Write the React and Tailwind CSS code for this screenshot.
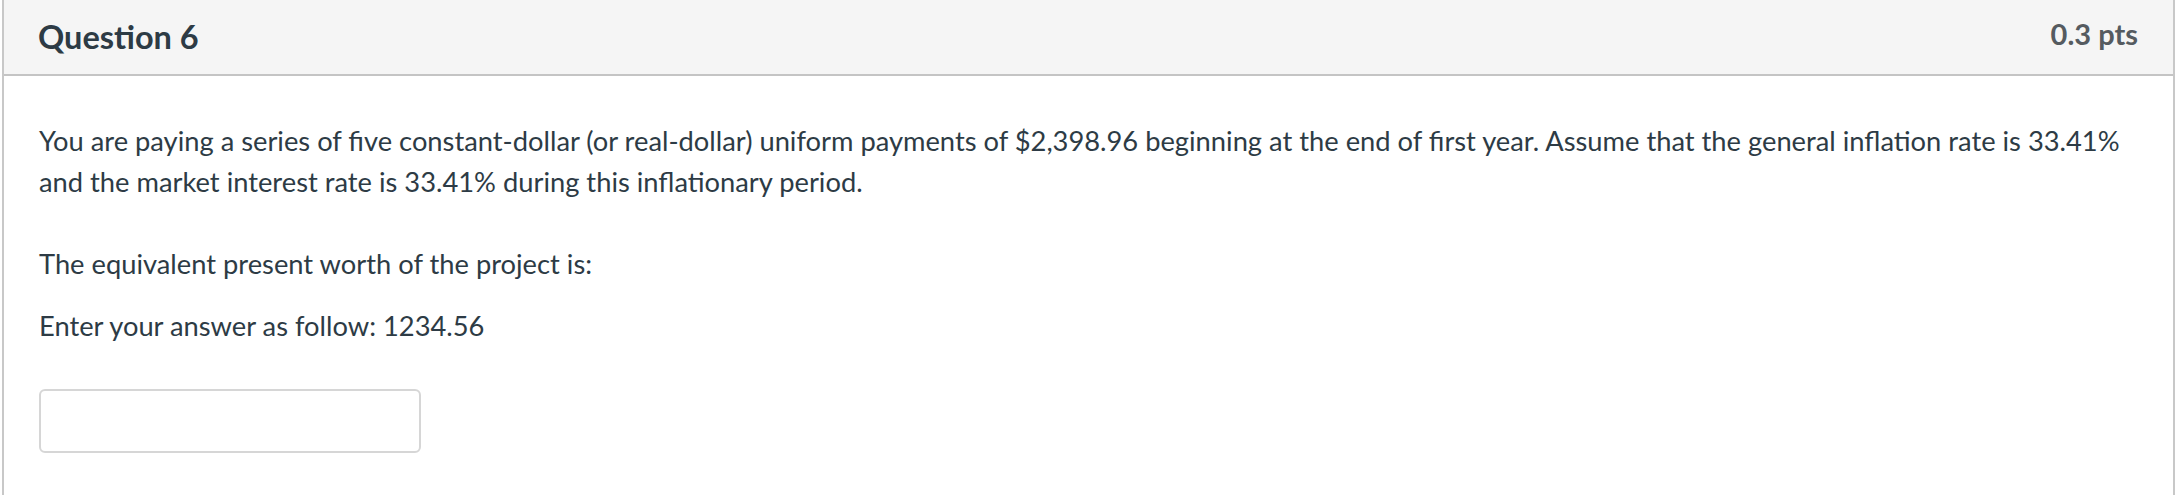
export default function App() {
  return (
    <div className="h-[495px] w-full overflow-hidden bg-white" style={{ fontFamily: "Lato, 'Noto Sans', sans-serif" }}>
      <div className="ml-[2px] w-[2173px] min-h-[600px] border-x-2 border-[#c8c8c8]">
        {/* header */}
        <div className="flex h-[76px] items-start justify-between border-b-2 border-[#c4c4c4] bg-[#f5f5f5] pl-[34px] pr-[35px]">
          <h2 className="pt-[13px] text-[32.5px] font-bold text-[#2d3b45]">Question 6</h2>
          <div className="pt-[12px] text-[29px] font-bold text-[#555b60]">0.3 pts</div>
        </div>

        {/* body */}
        <div className="pl-[35px] pr-[36px] pt-[45px] text-[27.3px] leading-[40.5px] text-[#2d3b45]">
          <p className="mb-[42px]">
            You are paying a series of five constant-dollar (or real-dollar) uniform payments of $2,398.96 beginning at the end of first year. Assume that the general inflation rate is 33.41% and the market interest rate is 33.41% during this inflationary period.
          </p>
          <p className="mb-[21px]">The equivalent present worth of the project is:</p>
          <p>Enter your answer as follow: 1234.56</p>
          <input
            type="text"
            aria-label="Answer"
            className="mt-[43px] block h-[64px] w-[382px] rounded-[6px] border-2 border-[#d6d6d6] bg-white"
          />
        </div>
      </div>
    </div>
  );
}
